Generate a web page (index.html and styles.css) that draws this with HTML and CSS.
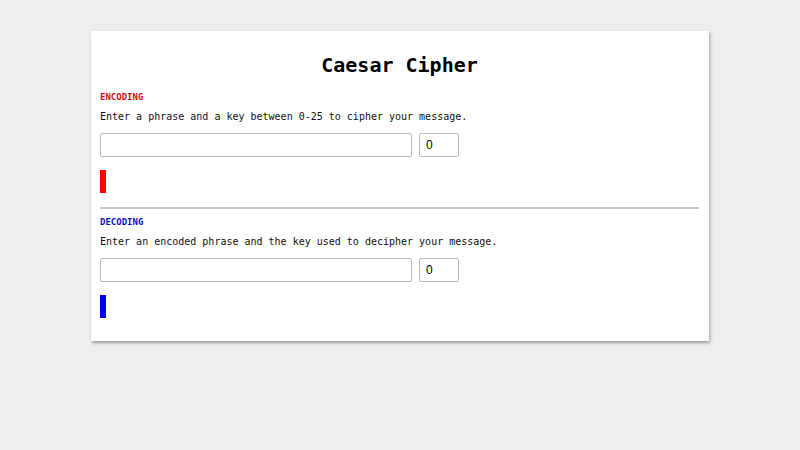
FILE: index.html
```html
<!DOCTYPE html>
<html lang="en">
<head>
  <meta charset="UTF-8">
  <meta name="viewport" content="width=device-width, initial-scale=1.0">
  <title>Caesar Cipher</title>
  <link rel="stylesheet" href="styles.css">
</head>
<body>
  <main class="card">
    <h1 class="title">Caesar Cipher</h1>

    <!-- Encoding -->
    <section class="cipher encode">
      <h2 class="cipher-label">ENCODING</h2>
      <p class="cipher-text">Enter a phrase and a key between 0-25 to cipher your message.</p>
      <div class="cipher-inputs">
        <input class="phrase-input" type="text">
        <input class="key-input" type="number" value="0" min="0" max="25">
      </div>
      <output class="cipher-output"></output>
    </section>

    <hr class="divider">

    <!-- Decoding -->
    <section class="cipher decode">
      <h2 class="cipher-label">DECODING</h2>
      <p class="cipher-text">Enter an encoded phrase and the key used to decipher your message.</p>
      <div class="cipher-inputs">
        <input class="phrase-input" type="text">
        <input class="key-input" type="number" value="0" min="0" max="25">
      </div>
      <output class="cipher-output"></output>
    </section>
  </main>
</body>
</html>
```

FILE: styles.css
```css
* {
  margin: 0;
  padding: 0;
  box-sizing: border-box;
}

body {
  font-family: 'DejaVu Sans Mono', 'Liberation Mono', monospace;
  background: #eeeeee;
  color: #111;
  min-height: 100vh;
  padding-top: 31px;
}

.card {
  width: 618px;
  margin: 0 auto;
  padding: 22px 10px 23px 9px;
  background: #fff;
  box-shadow: 1px 2px 3px rgba(0, 0, 0, 0.35);
  display: flex;
  flex-direction: column;
}

.title {
  font-size: 20px;
  line-height: 24px;
  font-weight: bold;
  text-align: center;
  color: #000;
  margin-bottom: 14px;
}

.cipher {
  display: flex;
  flex-direction: column;
}

.cipher-label {
  font-size: 9px;
  line-height: 12px;
  font-weight: bold;
  margin-bottom: 7px;
}

.encode .cipher-label { color: #cc1111; }
.decode .cipher-label { color: #1111bb; }

.cipher-text {
  font-size: 10px;
  line-height: 14px;
  margin-bottom: 9px;
}

.cipher-inputs {
  display: flex;
  gap: 7px;
  margin-bottom: 13px;
}

.cipher-inputs input {
  height: 24px;
  border: 1px solid #bbb;
  border-radius: 2px;
  font-family: 'Liberation Sans', Arial, sans-serif;
  font-size: 12px;
  padding: 0 6px;
  background: #fff;
  outline: none;
}

.phrase-input {
  width: 312px;
}

.key-input {
  width: 40px;
  -moz-appearance: textfield;
}

.key-input::-webkit-inner-spin-button,
.key-input::-webkit-outer-spin-button {
  -webkit-appearance: none;
  margin: 0;
}

.cipher-output {
  display: block;
  width: 6px;
  height: 23px;
}

.encode .cipher-output { background: #ff0000; }
.decode .cipher-output { background: #0000ee; }

.divider {
  border: none;
  border-top: 2px solid #c8c8c8;
  margin: 14px 0 7px;
}
```
